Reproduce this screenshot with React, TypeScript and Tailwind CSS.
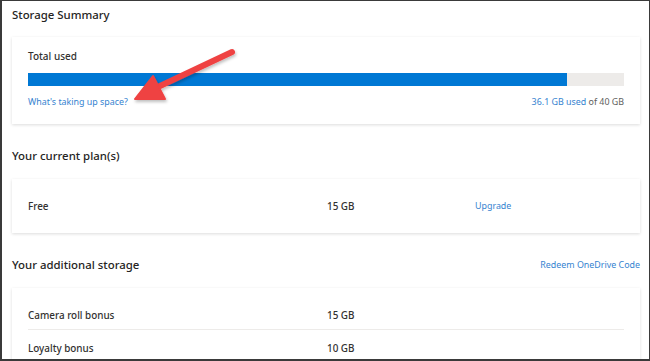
const font = { fontFamily: '"Noto Sans", "Open Sans", sans-serif' }

const Card = ({ className = '', children }: { className?: string; children: React.ReactNode }) => (
  <div className={`w-[628px] bg-white shadow-[0_1px_3px_rgba(0,0,0,0.14)] ${className}`}>{children}</div>
)

const Heading = ({ children, right }: { children: React.ReactNode; right?: React.ReactNode }) => (
  <div className="flex h-[28px] w-[628px] items-center justify-between">
    <h2 className="text-[11.4px] font-medium text-[#252423]">{children}</h2>
    {right}
  </div>
)

const Arrow = () => (
  <svg className="pointer-events-none absolute left-0 top-0" width="650" height="361" viewBox="0 0 650 361">
    <defs>
      <filter id="sh" x="-20%" y="-20%" width="140%" height="140%">
        <feDropShadow dx="1" dy="2" stdDeviation="1.5" floodColor="#000" floodOpacity="0.25" />
      </filter>
    </defs>
    <g filter="url(#sh)" fill="#ef4242" stroke="#ef4242">
      <line x1="230" y1="51" x2="158" y2="85" strokeWidth="6" strokeLinecap="round" />
      <polygon points="133,98 151,75 163,98" strokeWidth="2" strokeLinejoin="round" />
    </g>
  </svg>
)

export default function App() {
  return (
    <div
      style={font}
      className="relative h-[361px] w-[650px] overflow-hidden border border-l-2 border-b-2 border-[#3a3a3a] bg-white pl-[10px]"
    >
      <Heading>Storage Summary</Heading>

      <Card className="mt-[8px] px-4 pb-[15px] pt-[11px]">
        <div className="text-[10px] font-medium leading-4 text-[#323130]">Total used</div>
        <div className="mt-[9px] flex h-[13px] w-[596px] bg-[#edebe9]">
          <div className="h-full w-[539px] bg-[#0078d4]" />
        </div>
        <div className="mt-[9px] flex items-center justify-between text-[8.9px] leading-[14px]">
          <span className="text-[#3583d0]">What's taking up space?</span>
          <span>
            <span className="text-[#3583d0]">36.1 GB used</span>
            <span className="text-[#605e5c]"> of 40 GB</span>
          </span>
        </div>
      </Card>

      <div className="mt-[18px]">
        <Heading>Your current plan(s)</Heading>
      </div>
      <Card className="mt-[9px] grid h-[54px] grid-cols-[299px_148px_1fr] items-center px-4 text-[9.9px]">
        <span className="font-medium text-[#323130]">Free</span>
        <span className="font-medium text-[#323130]">15 GB</span>
        <span className="text-[8.9px] text-[#3583d0]">Upgrade</span>
      </Card>

      <div className="mt-[18px]">
        <Heading right={<span className="text-[8.9px] text-[#3583d0]">Redeem OneDrive Code</span>}>
          Your additional storage
        </Heading>
      </div>
      <Card className="mt-[9px] h-[80px] px-4 pt-[19px] text-[9.9px] text-[#323130]">
        <div className="grid grid-cols-[299px_1fr] border-b border-[#edebe9] pb-[6px] leading-4 font-medium">
          <span>Camera roll bonus</span>
          <span>15 GB</span>
        </div>
        <div className="grid grid-cols-[299px_1fr] pt-[10px] leading-4 font-medium">
          <span>Loyalty bonus</span>
          <span>10 GB</span>
        </div>
      </Card>

      <Arrow />
    </div>
  )
}
